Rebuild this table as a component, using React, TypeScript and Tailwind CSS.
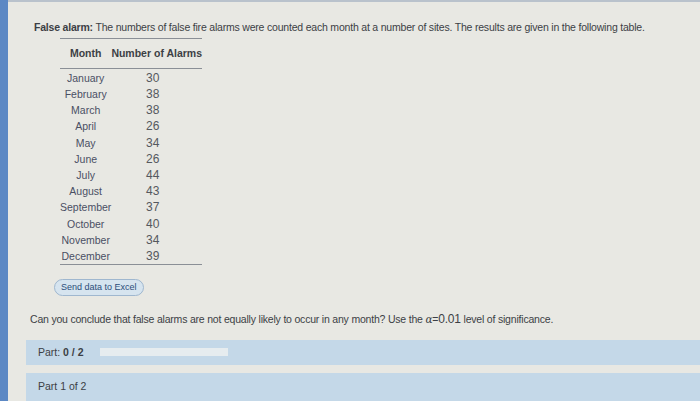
import React from 'react';

const rows: [string, number][] = [
  ['January', 30],
  ['February', 38],
  ['March', 38],
  ['April', 26],
  ['May', 34],
  ['June', 26],
  ['July', 44],
  ['August', 43],
  ['September', 37],
  ['October', 40],
  ['November', 34],
  ['December', 39],
];

const App: React.FC = () => {
  return (
    <div
      className="w-[700px] h-[401px] overflow-hidden flex bg-[#e8e8e3] text-[#3c3f45] whitespace-nowrap"
      style={{ fontFamily: '"Liberation Sans", Arial, sans-serif' }}
    >
      <div className="w-[8px] shrink-0 bg-[#5c88c4]" />
      <div className="flex-1 flex flex-col">
        <div className="h-[2px] bg-[#b9c2cc]" />
        <p className="text-[10.5px] tracking-[-0.2px] mt-[18px] ml-[26px] leading-[14px]">
          <span className="font-bold">False alarm:</span> The numbers of false fire alarms were counted each month at a number of sites. The results are given in the following table.
        </p>

        <table className="ml-[52px] mt-[4px] w-[140px] border-collapse">
          <thead>
            <tr className="border-t border-b border-[#8a8f96]">
              <th className="text-[10.5px] font-bold h-[30px] px-0 pt-[1px] w-[50px] text-center">Month</th>
              <th className="text-[10.5px] font-bold h-[30px] px-0 pt-[1px] text-center">Number of Alarms</th>
            </tr>
          </thead>
          <tbody className="border-b border-[#8a8f96]">
            {rows.map(([m, n], i) => (
              <tr key={m}>
                <td className={`text-[10.5px] text-center text-[#4a4f63] h-[16.2px] leading-[16px] ${i === 0 ? 'pt-[1px]' : ''}`}>{m}</td>
                <td className="text-[12px] text-center text-[#55585e] pr-[8px] leading-[16px]">{n}</td>
              </tr>
            ))}
          </tbody>
        </table>

        <div className="ml-[46px] mt-[8px]">
          <button className="h-[17px] px-[6px] rounded-full border border-[#9fb7cf] bg-[#d6e4ef] text-[9px] text-[#2c4e7a] leading-[15px]">
            Send data to Excel
          </button>
        </div>

        <p className="text-[10.5px] tracking-[-0.2px] ml-[22px] mt-[15px] leading-[14px]">
          Can you conclude that false alarms are not equally likely to occur in any month? Use the{' '}
          <span className="italic" style={{ fontFamily: '"DejaVu Serif", serif' }}>α</span>
          <span>=</span>
          <span className="text-[12px]">0.01</span> level of significance.
        </p>

        <div className="ml-[18px] mt-[14px] h-[25px] shrink-0 bg-[#c4d8e8] flex items-center pl-[12px]">
          <span className="text-[10.5px]">
            Part: <span className="font-bold">0 / 2</span>
          </span>
          <div className="ml-[16px] w-[128px] h-[8px] bg-[#e6ecef]" />
        </div>

        <div className="ml-[18px] mt-[8px] flex-1 bg-[#c4d8e8] pl-[12px] pt-[5px] leading-[14px]">
          <span className="text-[10.5px]">Part 1 of 2</span>
        </div>
      </div>
    </div>
  );
};

export default App;
